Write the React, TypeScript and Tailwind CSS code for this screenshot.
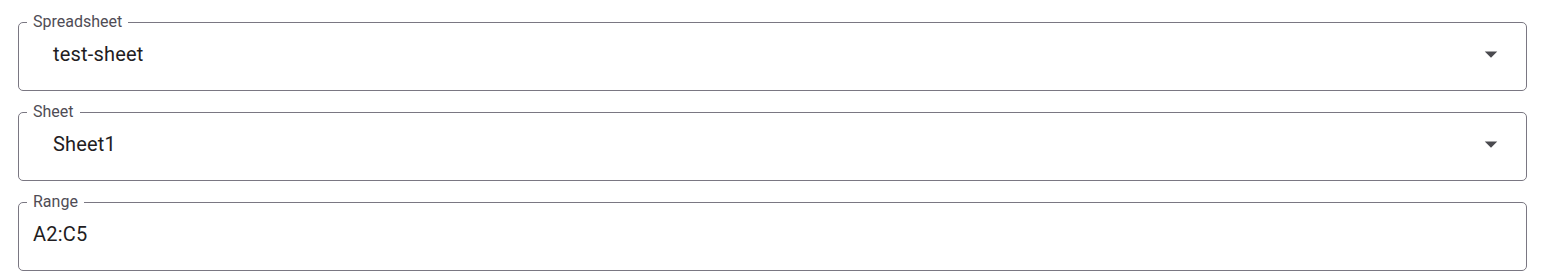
import React from 'react';

interface FieldProps {
  label: string;
  value: string;
  select?: boolean;
}

const ArrowDrop: React.FC = () => (
  <svg viewBox="0 0 24 24" className="w-[30px] h-[30px] shrink-0 fill-[#4a4a4f]">
    <path d="M7 10l5 5 5-5z" />
  </svg>
);

const OutlinedField: React.FC<FieldProps> = ({ label, value, select }) => (
  <fieldset className="m-0 p-0 border border-[#7a7782] rounded-[5px] min-w-0">
    <legend className="ml-[8px] px-[6px] text-[16px] leading-[16px] text-[#4f4c55]">{label}</legend>
    <div className="h-[60px] flex items-center pb-[13px]">
      <span
        className={`flex-1 text-[20px] leading-[24px] tracking-[0.19px] text-[#1f1d22] ${select ? 'pl-[34px]' : 'pl-[14px]'}`}
      >
        {value}
      </span>
      {select && (
        <span className="pr-[20px] flex">
          <ArrowDrop />
        </span>
      )}
    </div>
  </fieldset>
);

export default function App() {
  return (
    <div className="w-[1541px] h-[280px] bg-white pt-[14px] pl-[18px] font-['Roboto',sans-serif]">
      <div className="w-[1509px] flex flex-col gap-[13px]">
        <OutlinedField label="Spreadsheet" value="test-sheet" select />
        <OutlinedField label="Sheet" value="Sheet1" select />
        <OutlinedField label="Range" value="A2:C5" />
      </div>
    </div>
  );
}
